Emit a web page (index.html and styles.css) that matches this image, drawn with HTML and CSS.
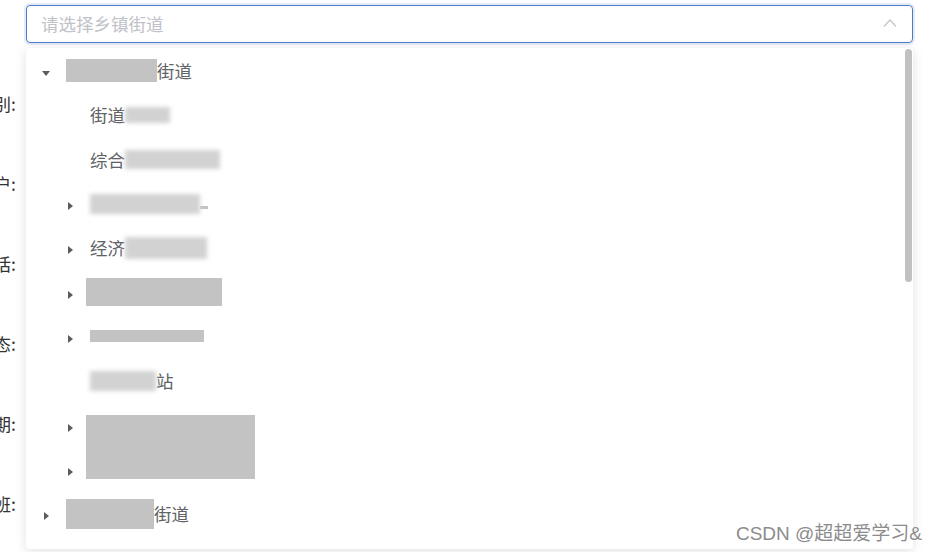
FILE: index.html
```html
<!DOCTYPE html>
<html lang="zh-CN">
<head>
    <meta charset="UTF-8">
    <meta name="viewport" content="width=device-width, initial-scale=1.0">
    <title>选择乡镇街道</title>
    <link rel="stylesheet" href="styles.css">
</head>
<body>

    <div class="page">
        <!-- Town / street picker, opened -->
        <div class="select">
            <div class="select-input">
                <span class="placeholder">请选择乡镇街道</span>
                <svg class="chevron" width="14" height="10" viewBox="0 0 14 10">
                    <polyline points="1,8.5 7,2 13,8.5" fill="none" stroke="#c0c4cc" stroke-width="1.2"/>
                </svg>
            </div>

            <div class="dropdown">
                <ul class="tree">
                    <li class="node lv0"><i class="arrow open"></i><span class="mask solid" style="width:91px;height:23px"></span>街道</li>
                    <li class="node lv1"><i class="arrow none"></i>街道<span class="mask blur" style="width:45px;height:16px"></span></li>
                    <li class="node lv1"><i class="arrow none"></i>综合<span class="mask blur" style="width:95px;height:19px"></span></li>
                    <li class="node lv1"><i class="arrow"></i><span class="mask blur" style="width:110px;height:20px"></span><span class="dash"></span></li>
                    <li class="node lv1"><i class="arrow"></i>经济<span class="mask blur" style="width:82px;height:22px"></span></li>
                    <li class="node lv1"><i class="arrow"></i><span class="mask solid shift" style="width:136px;height:28px"></span></li>
                    <li class="node lv1"><i class="arrow"></i><span class="mask solid" style="width:114px;height:12px"></span></li>
                    <li class="node lv1"><i class="arrow none"></i><span class="mask blur" style="width:66px;height:20px"></span>站</li>
                    <li class="node lv1"><i class="arrow"></i><span class="mask solid shift tall" style="width:169px;height:64px"></span></li>
                    <li class="node lv1"><i class="arrow"></i></li>
                    <li class="node lv0"><i class="arrow"></i><span class="mask solid" style="width:88px;height:30px"></span>街道</li>
                </ul>
                <div class="scroll-thumb"></div>
            </div>
        </div>

        <!-- Form labels behind the dropdown -->
        <div class="form">
            <div class="form-item"><label>性别:</label></div>
            <div class="form-item"><label>户:</label></div>
            <div class="form-item"><label>电话:</label></div>
            <div class="form-item"><label>状态:</label></div>
            <div class="form-item"><label>日期:</label></div>
            <div class="form-item"><label>值班:</label></div>
        </div>

        <div class="watermark">CSDN @超超爱学习&amp;</div>
    </div>

</body>
</html>
```

FILE: styles.css
```css
body {
    margin: 0;
    background-color: #fff;
    font-family: "Noto Sans CJK SC", "Liberation Sans", sans-serif;
    color: #606266;
}
.page {
    position: relative;
    width: 936px;
    height: 552px;
    overflow: hidden;
}
.select {
    position: relative;
    z-index: 2;
    margin: 5px 0 0 26px;
    width: 887px;
}
.select-input {
    display: flex;
    align-items: center;
    justify-content: space-between;
    box-sizing: border-box;
    height: 38px;
    padding: 0 15px 2px 14px;
    border: 1px solid #4a7bc6;
    border-radius: 4px;
    box-shadow: 0 0 0 2px rgba(74, 123, 198, 0.15);
}
.placeholder {
    font-size: 17.5px;
    color: #bfc2c8;
}
.chevron {
    display: block;
}
.dropdown {
    position: absolute;
    top: 43px;
    left: 0;
    width: 887px;
    height: 501px;
    background-color: #fff;
    border-radius: 4px;
    box-shadow: 0 2px 12px rgba(0, 0, 0, 0.12);
    overflow: hidden;
}
.tree {
    list-style: none;
    margin: 0;
    padding: 2px 0 0;
}
.node {
    display: flex;
    align-items: center;
    box-sizing: border-box;
    height: 44.3px;
    padding-bottom: 3px;
    font-size: 17.5px;
    color: #606266;
    white-space: nowrap;
}
.lv0 {
    padding-left: 8px;
}
.lv1 {
    padding-left: 32px;
}
.arrow {
    display: flex;
    align-items: center;
    justify-content: center;
    width: 24px;
    height: 24px;
    margin: 5px 8px 0 0;
}
.arrow::before {
    content: "";
    border-style: solid;
    border-color: transparent transparent transparent #5c5c5c;
    border-width: 4px 0 4px 5px;
}
.arrow.open::before {
    border-color: #5c5c5c transparent transparent transparent;
    border-width: 5px 4px 0 4px;
}
.arrow.none::before {
    display: none;
}
.mask {
    display: inline-block;
    flex-shrink: 0;
}
.solid {
    background-color: #c3c3c3;
}
.blur {
    background-color: #d2d2d2;
    filter: blur(2px);
}
.shift {
    margin-left: -4px;
}
.tall {
    align-self: flex-start;
    margin-top: 11px;
}
.dash {
    display: inline-block;
    width: 8px;
    height: 3px;
    margin-top: 8px;
    background-color: #c3c3c3;
}
.scroll-thumb {
    position: absolute;
    top: 1px;
    right: 1px;
    width: 7px;
    height: 233px;
    border-radius: 4px;
    background-color: #c1c1c1;
}
.form {
    display: flex;
    flex-direction: column;
    margin-top: 20px;
}
.form-item {
    display: flex;
    align-items: center;
    justify-content: flex-end;
    width: 16px;
    height: 80px;
    overflow: hidden;
}
.form-item label {
    flex-shrink: 0;
    font-size: 17.5px;
    color: #333;
    white-space: nowrap;
}
.watermark {
    position: absolute;
    right: 14px;
    bottom: 7px;
    z-index: 3;
    font-family: "Liberation Sans", "Noto Sans CJK SC", sans-serif;
    font-size: 19px;
    color: #8c8c8c;
    text-shadow: 0 0 1px #fff;
}
```
